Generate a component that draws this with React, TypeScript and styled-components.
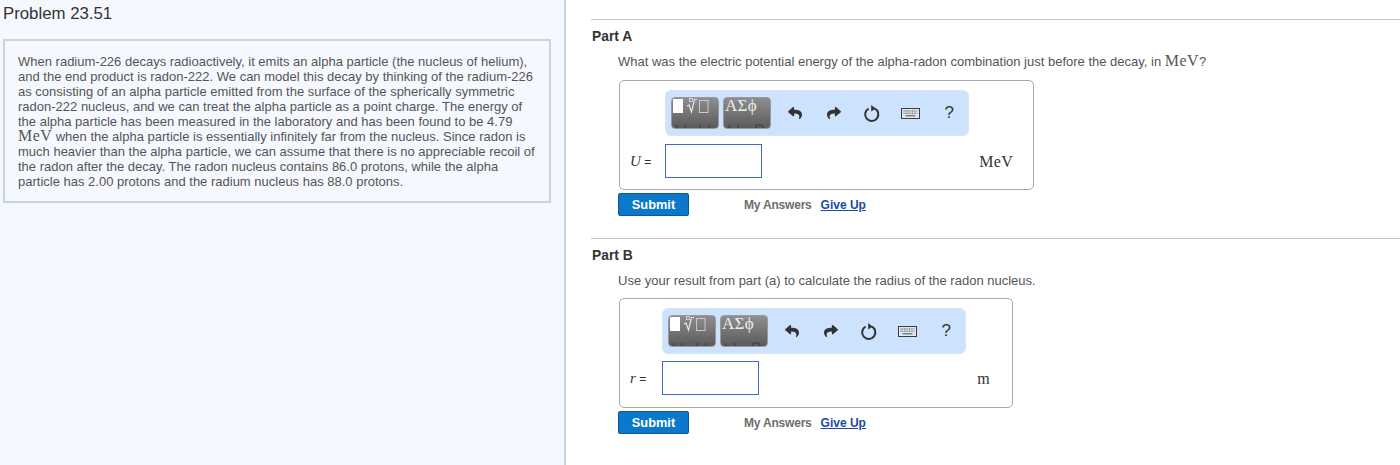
import React from "react";
import styled, { createGlobalStyle } from "styled-components";
import { FaReply, FaShare } from "react-icons/fa";

const GlobalStyle = createGlobalStyle`
  html, body {
    margin: 0;
    padding: 0;
    background: #ffffff;
    overflow: hidden;
  }
  body {
    font-family: "Liberation Sans", Arial, sans-serif;
    color: #333333;
  }
`;

const Page = styled.div`
  display: grid;
  grid-template-columns: 566px 1fr;
  height: 465px;
`;

const LeftPane = styled.div`
  background: #f5f9ff;
  border-right: 2px solid #c5d5e4;
  padding: 5px 13px 0 3px;
`;

const Title = styled.div`
  font-size: 16.8px;
  line-height: 18px;
  color: #333333;
`;

const Statement = styled.div`
  margin-top: 16px;
  border: 2px solid #c5d5e4;
  padding: 13px 13px 13px 13px;
  font-size: 13px;
  line-height: 15px;
  color: #555555;
  height: 134px;
`;

const MathText = styled.span`
  font-family: "Liberation Serif", "DejaVu Serif", serif;
  font-size: 16px;
  line-height: 14px;
  letter-spacing: 0.4px;
`;

const RightPane = styled.div`
  padding: 19px 0 0 25px;
`;

const Part = styled.section`
  border-top: 1px solid #c4c4c4;
  height: 219px;
  box-sizing: border-box;
  padding-top: 9px;
`;

const PartTitle = styled.div`
  font-size: 13.8px;
  font-weight: 700;
  line-height: 16px;
  color: #333333;
  padding-left: 1px;
`;

const Question = styled.div`
  margin: 9px 0 0 27px;
  font-size: 13px;
  line-height: 16px;
  color: #555555;
`;

const AnswerBox = styled.div<{ $width: number; $top: number }>`
  margin: ${(p) => p.$top}px 0 0 28px;
  width: ${(p) => p.$width}px;
  height: 110px;
  box-sizing: border-box;
  border: 1.5px solid #aaaaaa;
  border-radius: 5px;
  padding-top: 9px;
  background: #ffffff;
`;

const Toolbar = styled.div<{ $left: number }>`
  display: flex;
  align-items: center;
  margin-left: ${(p) => p.$left}px;
  width: 304px;
  height: 46px;
  box-sizing: border-box;
  padding-left: 5px;
  background: #cde3fd;
  border: 1px solid #dbe6f3;
  border-radius: 6px;
`;

const TemplateButton = styled.div`
  position: relative;
  flex-shrink: 0;
  width: 48px;
  height: 32px;
  margin-right: 4px;
  overflow: hidden;
  box-sizing: border-box;
  border: 1px solid #999999;
  border-radius: 4px;
  background: linear-gradient(#8f8d90, #5b5b5b);
`;

const GreekLabel = styled.span`
  display: block;
  padding: 0 0 0 1px;
  font-family: "Liberation Serif", serif;
  font-size: 17px;
  line-height: 16px;
  letter-spacing: 0.3px;
  color: #eeeeee;
  white-space: nowrap;
`;

const Cut = styled.svg`
  position: absolute;
  left: 0;
  bottom: 0;
`;

const IconRow = styled.div`
  display: flex;
  align-items: center;
  margin-left: 1px;
`;

const ToolIcon = styled.span`
  display: flex;
  align-items: center;
  justify-content: center;
  flex-shrink: 0;
  width: 38.5px;
  height: 24px;
  color: #333333;
  font-size: 17px;
`;

const AnswerRow = styled.div<{ $left: number; $right: number; $gap: number }>`
  display: flex;
  align-items: center;
  margin-top: ${(p) => p.$gap}px;
  padding-right: ${(p) => p.$right}px;
  height: 34px;
  & > label {
    width: ${(p) => p.$left}px;
  }
`;

const VarLabel = styled.label`
  box-sizing: border-box;
  padding-left: 10px;
  font-size: 12px;
  color: #333333;
  white-space: nowrap;
  & > i {
    font-family: "Liberation Serif", serif;
    font-size: 15px;
  }
`;

const ValueField = styled.input`
  width: 97px;
  height: 34px;
  box-sizing: border-box;
  border: 1.5px solid #3c6cc9;
  background: #ffffff;
  padding: 0;
  outline: none;
`;

const Unit = styled.span`
  margin-left: auto;
  padding-top: 2px;
  font-family: "Liberation Serif", serif;
  font-size: 16px;
  letter-spacing: 0.3px;
  color: #333333;
`;

const ActionRow = styled.div`
  display: flex;
  align-items: center;
  margin: 3px 0 0 27px;
`;

const SubmitButton = styled.button`
  width: 71px;
  height: 23px;
  box-sizing: border-box;
  padding: 0;
  background: #0b78cc;
  border: 1px solid #0a5a9a;
  border-radius: 2px;
  color: #ffffff;
  font-family: "Liberation Sans", Arial, sans-serif;
  font-size: 12.8px;
  font-weight: 700;
`;

const MyAnswers = styled.span`
  margin-left: 55px;
  font-size: 12px;
  font-weight: 700;
  letter-spacing: -0.2px;
  color: #6d6d6d;
`;

const GiveUp = styled.a`
  margin-left: 9px;
  font-size: 12px;
  font-weight: 700;
  color: #1a4aa8;
  text-decoration: underline;
`;

const RootGlyph = () => (
  <svg width="46" height="18" viewBox="0 0 46 18" style={{ display: "block" }}>
    <rect x="1" y="1" width="10" height="14" fill="#ffffff" />
    <path d="M15 8 L17 7 L19.5 14 L22.5 1.5 L25 1.5" stroke="#eeeeee" strokeWidth="1.1" fill="none" />
    <rect x="17.5" y="0.5" width="3" height="3" stroke="#eeeeee" strokeWidth="0.7" fill="none" />
    <rect x="27.5" y="2.5" width="8.5" height="12" stroke="#c9c9c9" strokeWidth="1" fill="none" />
  </svg>
);

const ReloadIcon = () => (
  <svg width="18" height="19" viewBox="0 0 18 19">
    <path d="M11.5 4.4 A6.6 6.6 0 1 1 5.6 4.6" stroke="#333333" strokeWidth="2" fill="none" />
    <path d="M8.2 1 L12.6 4.4 L8.2 7.4 Z" fill="#333333" />
  </svg>
);

const KeyboardIcon = () => (
  <svg width="19" height="11" viewBox="0 0 19 11">
    <rect x="0.5" y="0.5" width="18" height="10" fill="#dfe8f2" stroke="#3c3c3c" />
    <path d="M2.5 3h14M2.5 5.2h14" stroke="#4c4c4c" strokeDasharray="1 0.7" />
    <path d="M4.5 7.8h10" stroke="#4c4c4c" />
  </svg>
);

interface PartProps {
  name: string;
  question: React.ReactNode;
  variable: string;
  unit: string;
  boxWidth: number;
  boxTop: number;
  fieldGap: number;
  fieldLeft: number;
  unitRight: number;
}

const QuestionPart = ({ name, question, variable, unit, boxWidth, boxTop, fieldGap, fieldLeft, unitRight }: PartProps) => (
  <Part>
    <PartTitle>{name}</PartTitle>
    <Question>{question}</Question>
    <AnswerBox $width={boxWidth} $top={boxTop}>
      <Toolbar $left={fieldLeft}>
        <TemplateButton>
          <RootGlyph />
          <Cut width="46" height="4">
            <path d="M5 1v3M13 1v3M28 1v3M37 1v3" stroke="#3a3a3a" />
          </Cut>
        </TemplateButton>
        <TemplateButton>
          <GreekLabel>ΑΣϕ</GreekLabel>
          <Cut width="46" height="4">
            <path d="M5 1v3M14 1v3M32 4v-3h5q2 0 2 3" stroke="#3a3a3a" fill="none" />
          </Cut>
        </TemplateButton>
        <IconRow>
          <ToolIcon><FaReply size={14} /></ToolIcon>
          <ToolIcon><FaShare size={14} /></ToolIcon>
          <ToolIcon><ReloadIcon /></ToolIcon>
          <ToolIcon><KeyboardIcon /></ToolIcon>
          <ToolIcon>?</ToolIcon>
        </IconRow>
      </Toolbar>
      <AnswerRow $left={fieldLeft} $right={unitRight} $gap={fieldGap}>
        <VarLabel><i>{variable}</i> =</VarLabel>
        <ValueField />
        <Unit>{unit}</Unit>
      </AnswerRow>
    </AnswerBox>
    <ActionRow>
      <SubmitButton>Submit</SubmitButton>
      <MyAnswers>My Answers</MyAnswers>
      <GiveUp>Give Up</GiveUp>
    </ActionRow>
  </Part>
);

const App = () => (
  <>
    <GlobalStyle />
    <Page>
      <LeftPane>
        <Title>Problem 23.51</Title>
        <Statement>
          When radium-226 decays radioactively, it emits an alpha particle (the nucleus of helium),
          and the end product is radon-222. We can model this decay by thinking of the radium-226
          as consisting of an alpha particle emitted from the surface of the spherically symmetric
          radon-222 nucleus, and we can treat the alpha particle as a point charge. The energy of
          the alpha particle has been measured in the laboratory and has been found to be 4.79{" "}
          <MathText>MeV</MathText> when the alpha particle is essentially infinitely far from the
          nucleus. Since radon is much heavier than the alpha particle, we can assume that there is
          no appreciable recoil of the radon after the decay. The radon nucleus contains 86.0
          protons, while the alpha particle has 2.00 protons and the radium nucleus has 88.0 protons.
        </Statement>
      </LeftPane>
      <RightPane>
        <QuestionPart
          name="Part A"
          question={
            <>
              What was the electric potential energy of the alpha-radon combination just before the
              decay, in <MathText>MeV</MathText>?
            </>
          }
          variable="U"
          unit="MeV"
          boxWidth={415}
          boxTop={10}
          fieldGap={8}
          fieldLeft={45}
          unitRight={20}
        />
        <QuestionPart
          name="Part B"
          question="Use your result from part (a) to calculate the radius of the radon nucleus."
          variable="r"
          unit="m"
          boxWidth={394}
          boxTop={9}
          fieldGap={7}
          fieldLeft={42}
          unitRight={22}
        />
      </RightPane>
    </Page>
  </>
);

export default App;
